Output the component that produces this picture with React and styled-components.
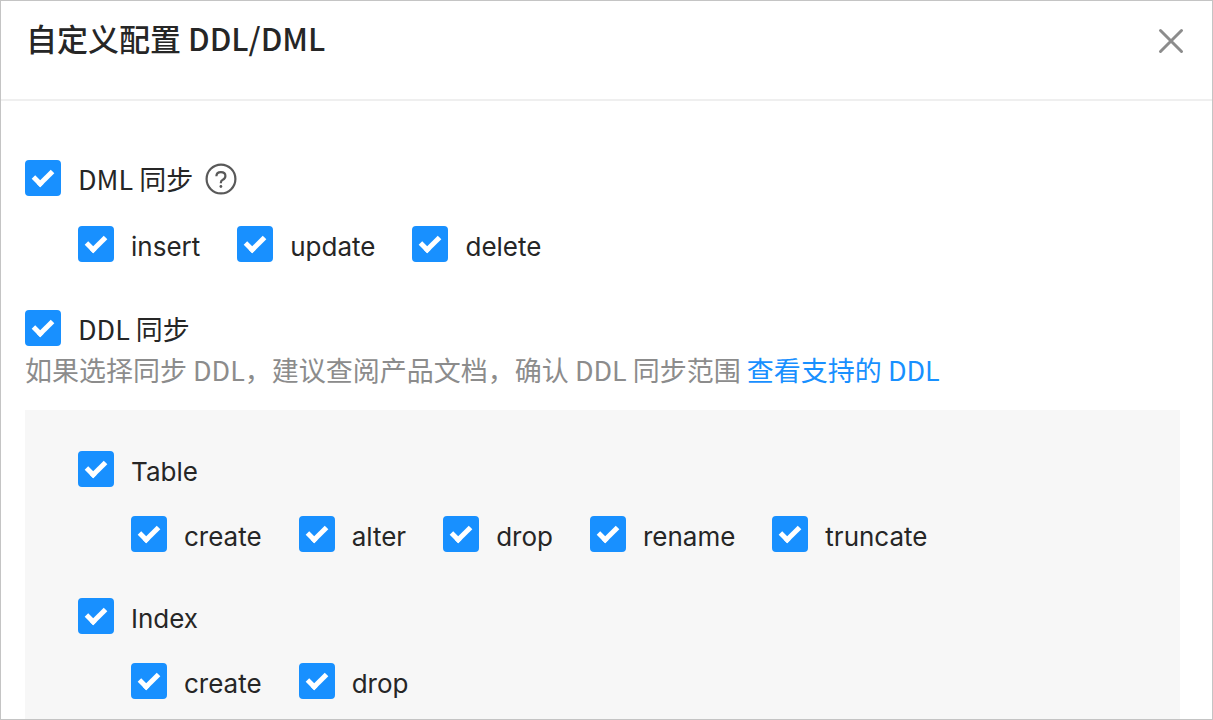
import { useState } from 'react'
import styled, { createGlobalStyle } from 'styled-components'


const GlobalStyle = createGlobalStyle`
    * {
        box-sizing: border-box;
    }
    body {
        margin: 0;
        background-color: #ffffff;
        color: #262626;
        font-family: Inter, "Noto Sans CJK SC", sans-serif;
        font-size: 26px;
    }
`

const Dialog = styled.div`
    display: flex;
    flex-direction: column;
    height: 100vh;
    border: 1px solid #c4c4c4;
`

const Header = styled.header`
    display: flex;
    flex-shrink: 0;
    align-items: flex-start;
    justify-content: space-between;
    padding: 14px 27px 39px 25px;
    border-bottom: 2px solid #efefef;
`

const Title = styled.h1`
    margin: 0;
    font-family: "Noto Sans CJK SC", sans-serif;
    font-size: 31px;
    font-weight: 500;
    line-height: 45px;
`

const CloseButton = styled.button`
    display: flex;
    margin-top: 12px;
    padding: 0;
    border: none;
    background: none;
    color: #8c8c8c;
    cursor: pointer;
`

const Body = styled.main`
    flex: 1;
    min-height: 0;
    padding: 59px 32px 32px 24px;
    overflow-y: auto;
    scrollbar-width: none;
`

const Group = styled.section`
    display: flex;
    flex-direction: column;
    gap: ${({ $compact }) => ($compact ? '25px' : '26px')};
    & + & {
        margin-top: 42px;
    }
`

const Row = styled.div`
    display: flex;
    flex-wrap: wrap;
    gap: ${({ $nested }) => ($nested ? '0 37px' : '0 12px')};
    padding-left: ${({ $nested }) => ($nested ? '53px' : '0')};
`

const Label = styled.label`
    display: flex;
    align-items: flex-start;
    gap: 17px;
    height: 40px;
    cursor: pointer;
`

const LabelText = styled.span`
    font-family: ${({ $cjk }) => ($cjk ? '"Noto Sans CJK SC", sans-serif' : 'inherit')};
    font-size: ${({ $cjk }) => ($cjk ? '27px' : '26px')};
    line-height: ${({ $cjk }) => ($cjk ? '38px' : '42px')};
`

const Checkbox = styled.input`
    appearance: none;
    display: grid;
    place-items: center;
    width: 36px;
    height: 36px;
    margin: 0;
    border: 2px solid #d9d9d9;
    border-radius: 4px;
    background-color: #ffffff;
    cursor: pointer;
    &:checked {
        border-color: #1890ff;
        background-color: #1890ff;
    }
    &:checked::after {
        content: "";
        box-sizing: border-box;
        width: 12px;
        height: 20px;
        margin-bottom: 4px;
        border: solid #ffffff;
        border-width: 0 5px 5px 0;
        transform: rotate(45deg);
    }
`

const HelpButton = styled.button`
    display: flex;
    align-items: flex-start;
    padding: 3px 0 0;
    border: none;
    background: none;
    color: #595959;
    cursor: pointer;
`

const DdlSection = styled.section`
    margin-top: 44px;
`

const Hint = styled.p`
    margin: 0 0 20px;
    color: #8c8c8c;
    font-family: "Noto Sans CJK SC", sans-serif;
    font-size: 27px;
    line-height: 40px;
`

const DocLink = styled.a`
    color: #1890ff;
    text-decoration: none;
`

const Panel = styled.div`
    padding: 41px 53px;
    background-color: #f7f7f7;
`

const DML_OPTIONS = ['insert', 'update', 'delete']

const DDL_GROUPS = [
    { name: 'Table', options: ['create', 'alter', 'drop', 'rename', 'truncate'] },
    { name: 'Index', options: ['create', 'drop'] },
]

const CheckItem = ({ children, cjk, checked, onChange }) => (
    <Label>
        <Checkbox type="checkbox" checked={checked} onChange={(e) => onChange(e.target.checked)} />
        <LabelText $cjk={cjk}>{children}</LabelText>
    </Label>
)

const CheckGroup = ({ name, options, cjk, compact, extra }) => {
    const [selected, setSelected] = useState(options)

    const toggle = (option, on) => {
        setSelected(on ? [...selected, option] : selected.filter((item) => item !== option))
    }

    return (
        <Group $compact={compact}>
            <Row>
                <CheckItem
                    cjk={cjk}
                    checked={selected.length > 0}
                    onChange={(on) => setSelected(on ? options : [])}
                >
                    {name}
                </CheckItem>
                {extra}
            </Row>
            <Row $nested>
                {options.map((option) => (
                    <CheckItem
                        key={option}
                        checked={selected.includes(option)}
                        onChange={(on) => toggle(option, on)}
                    >
                        {option}
                    </CheckItem>
                ))}
            </Row>
        </Group>
    )
}

const CloseIcon = () => (
    <svg width="28" height="28" viewBox="0 0 28 28" fill="none" stroke="currentColor" strokeWidth="3" strokeLinecap="round">
        <path d="M3.5 3.5 24.5 24.5M24.5 3.5 3.5 24.5" />
    </svg>
)

const HelpIcon = () => (
    <svg width="32" height="32" viewBox="0 0 32 32" fill="none" stroke="currentColor" strokeWidth="2.2">
        <circle cx="16" cy="16" r="14.4" />
        <path d="M11.4 13.2c0-2.6 1.8-4.1 4.5-4.1s4.5 1.6 4.5 3.9c0 1.9-1 3-2.6 3.7-1.4.6-1.9 1.4-1.9 2.8v.8" />
        <circle cx="15.9" cy="23.5" r="1.4" fill="currentColor" stroke="none" />
    </svg>
)

export default function App() {
    const [ddlEnabled, setDdlEnabled] = useState(true)

    return (
        <>
            <GlobalStyle />
            <Dialog role="dialog" aria-labelledby="dialog-title">
                <Header>
                    <Title id="dialog-title">自定义配置 DDL/DML</Title>
                    <CloseButton type="button" aria-label="关闭">
                        <CloseIcon />
                    </CloseButton>
                </Header>
                <Body>
                    <CheckGroup
                        name="DML 同步"
                        options={DML_OPTIONS}
                        cjk
                        extra={
                            <HelpButton type="button" aria-label="帮助">
                                <HelpIcon />
                            </HelpButton>
                        }
                    />
                    <DdlSection>
                        <Row>
                            <CheckItem cjk checked={ddlEnabled} onChange={setDdlEnabled}>DDL 同步</CheckItem>
                        </Row>
                        <Hint>
                            如果选择同步 DDL，建议查阅产品文档，确认 DDL 同步范围{' '}
                            <DocLink href="#ddl">查看支持的 DDL</DocLink>
                        </Hint>
                        {ddlEnabled && (
                            <Panel>
                                {DDL_GROUPS.map((group) => (
                                    <CheckGroup key={group.name} compact {...group} />
                                ))}
                            </Panel>
                        )}
                    </DdlSection>
                </Body>
            </Dialog>
        </>
    )
}
